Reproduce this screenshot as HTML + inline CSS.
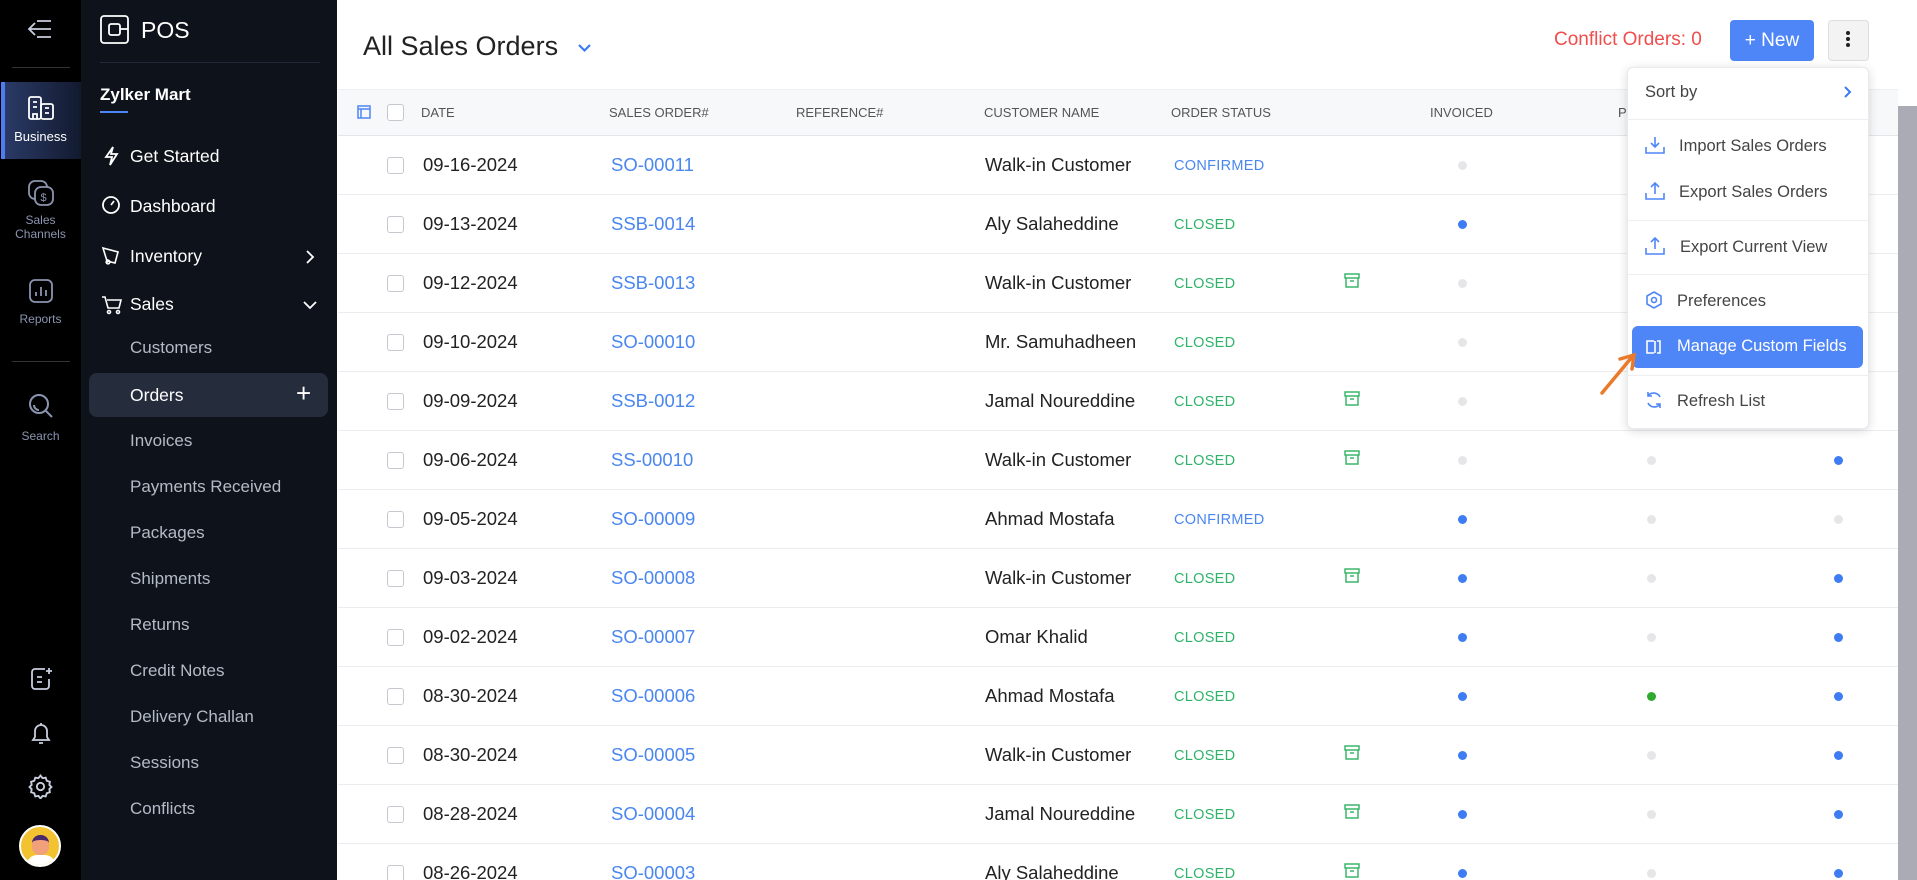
<!DOCTYPE html>
<html style="overflow:hidden;width:1917px;height:880px"><head><style>
*{box-sizing:border-box;margin:0;padding:0}
body{width:1917px;height:880px;overflow:hidden;background:#fff;font-family:"Liberation Sans",sans-serif;position:relative}
#wrap{position:absolute;left:0;top:0;width:1917px;height:880px;overflow:hidden}
.a{position:absolute}
#rail{left:0;top:0;width:81px;height:880px;background:#000}
#side{left:81px;top:0;width:256px;height:880px;background:#0e121b}
.rl{color:#8b95b0;font-size:12px;text-align:center;width:81px;left:0}
.si{left:130px;color:#fff;font-size:17.5px}
.sub{left:130px;color:#b4bac6;font-size:17px}
.row{left:338px;width:1560px;height:59px;border-bottom:1px solid #ebedf0}
.t{font-size:18.5px;color:#222}
.lnk{color:#4a86f0;font-size:18.5px}
.st{font-size:14.5px;letter-spacing:.3px}
.cb{width:17px;height:17px;border:1.5px solid #c5c8cf;border-radius:3px;background:#fff}
.dot{width:9px;height:9px;border-radius:50%}
.mi{left:1679px;color:#444;font-size:16.5px}
.sep{left:1627px;width:242px;height:1px;background:#eceef1}
.hd{font-size:13px;color:#555;top:105px}
</style></head><body><div id="wrap">
<div id="rail" class="a">
 <svg class="a" style="left:27px;top:16px" width="28" height="26" viewBox="0 0 28 26" fill="none" stroke="#c8cede" stroke-width="1.8"><path d="M10 5h14M2 13h22M10 21h14M8 7l-6 6 6 6"/></svg>
 <div class="a" style="left:12px;top:67px;width:58px;height:1px;background:#333"></div>
 <div class="a" style="left:1px;top:82px;width:80px;height:77px;background:linear-gradient(90deg,#2a3a66,#121a2f);border-left:4px solid #4f7cf0"></div>
 <svg class="a" style="left:28px;top:96px" width="26" height="24" viewBox="0 0 26 24" fill="none" stroke="#fff" stroke-width="1.8"><rect x="1" y="1" width="12" height="22" rx="2"/><rect x="13" y="8" width="12" height="15" rx="2"/><path d="M5 6h4M5 11h4M5 23v-5h4v5M17 12h4M17 17h4"/></svg>
 <div class="a rl" style="top:129px;color:#fff;font-size:13px">Business</div>
 <svg class="a" style="left:28px;top:180px" width="26" height="26" viewBox="0 0 26 26" fill="none" stroke="#8b95b0" stroke-width="1.8"><rect x="1" y="1" width="18" height="18" rx="6"/><rect x="7" y="7" width="18" height="18" rx="6" fill="#000"/><text x="12.5" y="21" font-size="11" fill="#8b95b0" stroke="none" font-family="Liberation Sans">$</text></svg>
 <div class="a rl" style="top:213px;line-height:14px">Sales<br>Channels</div>
 <svg class="a" style="left:29px;top:279px" width="24" height="24" viewBox="0 0 24 24" fill="none" stroke="#8b95b0" stroke-width="1.8"><rect x="1" y="1" width="22" height="22" rx="5"/><path d="M7 17v-4M12 17V8M17 17v-6"/></svg>
 <div class="a rl" style="top:312px">Reports</div>
 <div class="a" style="left:12px;top:361px;width:58px;height:1px;background:#333"></div>
 <svg class="a" style="left:28px;top:393px" width="26" height="26" viewBox="0 0 26 26" fill="none" stroke="#8b95b0" stroke-width="2"><circle cx="11" cy="11" r="9"/><path d="M18 18l6 6M6 12a5 5 0 0 0 5 5"/></svg>
 <div class="a rl" style="top:429px">Search</div>
 <svg class="a" style="left:30px;top:667px" width="24" height="24" viewBox="0 0 24 24" fill="none" stroke="#c8cede" stroke-width="1.8"><path d="M15 2H5a3 3 0 0 0-3 3v14a3 3 0 0 0 3 3h11a3 3 0 0 0 3-3v-7M7 10h5M7 15h5M19 1v6M16 4h6"/></svg>
 <svg class="a" style="left:29px;top:721px" width="24" height="24" viewBox="0 0 24 24" fill="none" stroke="#c8cede" stroke-width="1.8"><path d="M4 19h16l-2-3v-6a6 6 0 0 0-12 0v6zM10 22h4M12 2v2"/></svg>
 <svg class="a" style="left:28px;top:774px" width="25" height="25" viewBox="0 0 24 24" fill="none" stroke="#c8cede" stroke-width="1.8"><circle cx="12" cy="12" r="3.5"/><path d="M12 1.5l2 2.5 3-.5 1 3 3 1-.5 3 2 2-2 2 .5 3-3 1-1 3-3-.5-2 2.5-2-2.5-3 .5-1-3-3-1 .5-3-2-2 2-2-.5-3 3-1 1-3 3 .5z"/></svg>
 <div class="a" style="left:19px;top:825px;width:42px;height:42px;border-radius:50%;background:#f2c230;border:2px solid #fff;overflow:hidden">
  <div class="a" style="left:11px;top:8px;width:17px;height:20px;border-radius:8px;background:#f0a07a;border-top:5px solid #4a2a6a"></div>
  <div class="a" style="left:6px;top:28px;width:28px;height:14px;border-radius:10px 10px 0 0;background:#fff"></div>
 </div>
</div>
<div id="side" class="a">
 <svg class="a" style="left:19px;top:15px" width="30" height="30" viewBox="0 0 30 30" fill="none" stroke="#fff" stroke-width="1.8"><rect x="1" y="1" width="27" height="27" rx="3"/><rect x="9" y="9" width="11" height="11" rx="2"/><path d="M20 14h8"/></svg>
 <div class="a" style="left:60px;top:17px;color:#fff;font-size:23px">POS</div>
 <div class="a" style="left:19px;top:62px;width:220px;height:1px;background:#222837"></div>
 <div class="a" style="left:19px;top:85px;color:#fff;font-size:17px;font-weight:bold">Zylker Mart</div>
 <div class="a" style="left:19px;top:111px;width:28px;height:2px;background:#4f86f7"></div>
 <svg class="a" style="left:22px;top:146px" width="16" height="20" viewBox="0 0 16 20" fill="none" stroke="#fff" stroke-width="1.8"><path d="M10 1L3 11h6l-2 8 7-11H8z"/></svg>
 <div class="a si" style="left:49px;top:146px">Get Started</div>
 <svg class="a" style="left:20px;top:195px" width="20" height="20" viewBox="0 0 20 20" fill="none" stroke="#fff" stroke-width="1.8"><circle cx="10" cy="10" r="8"/><path d="M10 10l3-4"/></svg>
 <div class="a si" style="left:49px;top:196px">Dashboard</div>
 <svg class="a" style="left:20px;top:246px" width="20" height="20" viewBox="0 0 20 20" fill="none" stroke="#fff" stroke-width="1.6"><path d="M2 2l15 4-3 11-8-2zM6 13v5"/><circle cx="7" cy="16" r="1.8"/></svg>
 <div class="a si" style="left:49px;top:246px">Inventory</div>
 <svg class="a" style="left:224px;top:250px" width="10" height="14" viewBox="0 0 10 14" fill="none" stroke="#fff" stroke-width="1.8"><path d="M2 1l6 6-6 6"/></svg>
 <svg class="a" style="left:20px;top:295px" width="22" height="20" viewBox="0 0 22 20" fill="none" stroke="#fff" stroke-width="1.6"><path d="M1 2h3l3 11h11l2-8H6"/><circle cx="8" cy="17" r="1.5"/><circle cx="17" cy="17" r="1.5"/></svg>
 <div class="a si" style="left:49px;top:294px">Sales</div>
 <svg class="a" style="left:222px;top:300px" width="14" height="10" viewBox="0 0 14 10" fill="none" stroke="#fff" stroke-width="1.8"><path d="M1 2l6 6 6-6"/></svg>
 <div class="a sub" style="left:49px;top:338px">Customers</div>
 <div class="a" style="left:8px;top:373px;width:239px;height:44px;border-radius:8px;background:#252c3c"></div>
 <div class="a si" style="left:49px;top:385px">Orders</div>
 <div class="a" style="left:215px;top:378px;color:#fff;font-size:26px;font-weight:300">+</div>
 <div class="a sub" style="left:49px;top:431px">Invoices</div>
 <div class="a sub" style="left:49px;top:477px">Payments Received</div>
 <div class="a sub" style="left:49px;top:523px">Packages</div>
 <div class="a sub" style="left:49px;top:569px">Shipments</div>
 <div class="a sub" style="left:49px;top:615px">Returns</div>
 <div class="a sub" style="left:49px;top:661px">Credit Notes</div>
 <div class="a sub" style="left:49px;top:707px">Delivery Challan</div>
 <div class="a sub" style="left:49px;top:753px">Sessions</div>
 <div class="a sub" style="left:49px;top:799px">Conflicts</div>
</div>

<div class="a" style="left:363px;top:31px;font-size:27px;color:#222">All Sales Orders</div>
<svg class="a" style="left:578px;top:44px" width="13" height="9" viewBox="0 0 13 9" fill="none" stroke="#3b7bf0" stroke-width="2.2"><path d="M1 1l5.5 5.5L12 1"/></svg>
<div class="a" style="left:1554px;top:29px;font-size:19px;color:#f04d4d">Conflict Orders: 0</div>
<div class="a" style="left:1730px;top:20px;width:84px;height:41px;border-radius:4px;background:#4f86f7;color:#fff;font-size:19px;line-height:41px;text-align:center">+ New</div>
<div class="a" style="left:1828px;top:20px;width:41px;height:41px;border-radius:4px;background:#f3f3f4;border:1px solid #ddd"></div>
<div class="a" style="left:1846px;top:31px;width:4px;height:4px;border-radius:2px;background:#222;box-shadow:0 6px 0 #222,0 12px 0 #222"></div>

<div class="a" style="left:338px;top:89px;width:1560px;height:47px;background:#f7f8fa;border-top:1px solid #eceef1;border-bottom:1px solid #e3e5e9"></div>
<svg class="a" style="left:357px;top:105px" width="15" height="15" viewBox="0 0 15 15" fill="none" stroke="#4f86f7" stroke-width="1.5"><rect x="1" y="1" width="12" height="12"/><path d="M1 4h12M4 4v9"/></svg>
<div class="a cb" style="left:387px;top:104px"></div>
<div class="a hd" style="left:421px">DATE</div>
<div class="a hd" style="left:609px">SALES ORDER#</div>
<div class="a hd" style="left:796px">REFERENCE#</div>
<div class="a hd" style="left:984px">CUSTOMER NAME</div>
<div class="a hd" style="left:1171px">ORDER STATUS</div>
<div class="a hd" style="left:1430px">INVOICED</div>
<div class="a hd" style="left:1618px">P</div>
<div class="a" style="left:1898px;top:88px;width:19px;height:792px;background:#ababb5"></div>
<div class="a" style="left:1898px;top:88px;width:19px;height:18px;background:#fff"></div>

<div id="rows"></div>
<script>
const d=[["09-16-2024","SO-00011","Walk-in Customer","CONFIRMED",0,"g","",""],
["09-13-2024","SSB-0014","Aly Salaheddine","CLOSED",0,"b","",""],
["09-12-2024","SSB-0013","Walk-in Customer","CLOSED",1,"g","",""],
["09-10-2024","SO-00010","Mr. Samuhadheen","CLOSED",0,"g","",""],
["09-09-2024","SSB-0012","Jamal Noureddine","CLOSED",1,"g","",""],
["09-06-2024","SS-00010","Walk-in Customer","CLOSED",1,"g","g","b"],
["09-05-2024","SO-00009","Ahmad Mostafa","CONFIRMED",0,"b","g","g"],
["09-03-2024","SO-00008","Walk-in Customer","CLOSED",1,"b","g","b"],
["09-02-2024","SO-00007","Omar Khalid","CLOSED",0,"b","g","b"],
["08-30-2024","SO-00006","Ahmad Mostafa","CLOSED",0,"b","G","b"],
["08-30-2024","SO-00005","Walk-in Customer","CLOSED",1,"b","g","b"],
["08-28-2024","SO-00004","Jamal Noureddine","CLOSED",1,"b","g","b"],
["08-26-2024","SO-00003","Aly Salaheddine","CLOSED",1,"b","g","b"]];
const col={b:"#3d7cf2",g:"#e6e6e8",G:"#2eaa2e"};
let h="";
d.forEach((r,i)=>{const c=165+i*59;
h+=`<div class="a row" style="top:${c-29}px"></div>
<div class="a cb" style="left:387px;top:${c-8}px"></div>
<div class="a t" style="left:423px;top:${c-11}px">${r[0]}</div>
<div class="a lnk" style="left:611px;top:${c-11}px">${r[1]}</div>
<div class="a t" style="left:985px;top:${c-11}px">${r[2]}</div>
<div class="a st" style="left:1174px;top:${c-7}px;color:${r[3]=="CLOSED"?"#2fb36a":"#4a86f0"}">${r[3]}</div>`;
if(r[4])h+=`<svg class="a" style="left:1344px;top:${c-10}px" width="16" height="15" viewBox="0 0 16 15" fill="none" stroke="#3cb56a" stroke-width="1.5"><rect x="1" y="1" width="14" height="4"/><path d="M2 5v9h12V5M6 8h4"/></svg>`;
h+=`<div class="a dot" style="left:1458px;top:${c-4}px;background:${col[r[5]]}"></div>`;
if(r[6])h+=`<div class="a dot" style="left:1647px;top:${c-4}px;background:${col[r[6]]}"></div><div class="a dot" style="left:1834px;top:${c-4}px;background:${col[r[7]]}"></div>`;
});
document.getElementById("rows").innerHTML=h;
</script>

<div class="a" style="left:1627px;top:67px;width:242px;height:362px;background:#fff;border-radius:6px;box-shadow:0 2px 10px rgba(0,0,0,.15);border:1px solid #e8e9ec"></div>
<div class="a mi" style="left:1645px;top:83px">Sort by</div>
<svg class="a" style="left:1844px;top:86px" width="8" height="12" viewBox="0 0 8 12" fill="none" stroke="#3b7bf0" stroke-width="2"><path d="M1 1l5 5-5 5"/></svg>
<div class="sep a" style="top:119px"></div>
<svg class="a" style="left:1645px;top:136px" width="20" height="19" viewBox="0 0 20 19" fill="none" stroke="#4f86f7" stroke-width="1.6"><path d="M10 1v10M6 7l4 4 4-4M1 11v6h18v-6"/></svg>
<div class="a mi" style="top:137px">Import Sales Orders</div>
<svg class="a" style="left:1645px;top:182px" width="20" height="19" viewBox="0 0 20 19" fill="none" stroke="#4f86f7" stroke-width="1.6"><path d="M10 12V2M6 5l4-4 4 4M1 11v6h18v-6"/></svg>
<div class="a mi" style="top:183px">Export Sales Orders</div>
<div class="sep a" style="top:220px"></div>
<svg class="a" style="left:1645px;top:237px" width="20" height="19" viewBox="0 0 20 19" fill="none" stroke="#4f86f7" stroke-width="1.6"><path d="M10 12V2M6 5l4-4 4 4M1 11v6h18v-6"/></svg>
<div class="a mi" style="left:1680px;top:238px">Export Current View</div>
<div class="sep a" style="top:274px"></div>
<svg class="a" style="left:1645px;top:291px" width="18" height="18" viewBox="0 0 18 18" fill="none" stroke="#4f86f7" stroke-width="1.6"><path d="M9 1l7 4v8l-7 4-7-4V5z"/><circle cx="9" cy="9" r="2.5"/></svg>
<div class="a mi" style="left:1677px;top:292px">Preferences</div>
<div class="a" style="left:1632px;top:326px;width:231px;height:42px;border-radius:6px;background:#4f86f7"></div>
<svg class="a" style="left:1645px;top:338px" width="18" height="18" viewBox="0 0 18 18" fill="none" stroke="#fff" stroke-width="1.6"><path d="M9 3H2v12h7M12 3h3v12h-3M10 3v12"/></svg>
<div class="a mi" style="left:1677px;top:337px;color:#fff">Manage Custom Fields</div>
<div class="sep a" style="top:375px"></div>
<svg class="a" style="left:1645px;top:391px" width="18" height="18" viewBox="0 0 18 18" fill="none" stroke="#4f86f7" stroke-width="1.6"><path d="M15 6a7 7 0 0 0-12-1M3 12a7 7 0 0 0 12 1M3 1v4h4M15 17v-4h-4"/></svg>
<div class="a mi" style="left:1677px;top:392px">Refresh List</div>
<svg class="a" style="left:1598px;top:347px" width="42" height="50" viewBox="0 0 42 50" fill="none" stroke="#ea7a2a" stroke-width="3.5" stroke-linecap="round"><path d="M4 46L34 10M22 12l14-4-2 14"/></svg>
</div></body></html>
